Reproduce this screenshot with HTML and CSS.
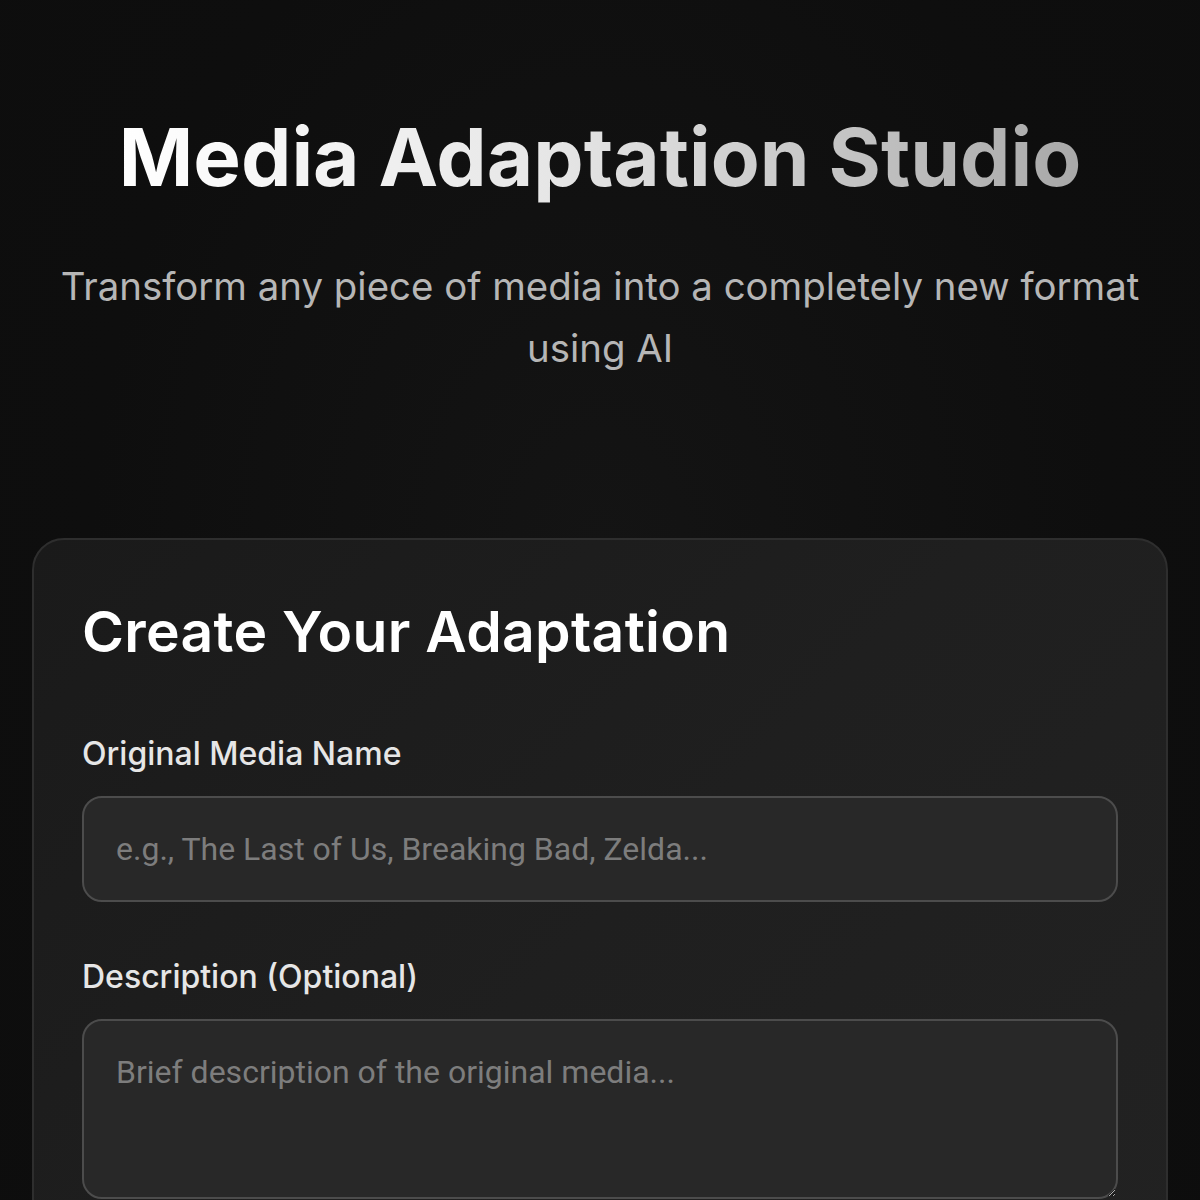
FILE: index.html
```html
<!DOCTYPE html>
<html lang="en">
<head>
<meta charset="utf-8">
<title>Media Adaptation Studio</title>
<link rel="stylesheet" href="styles.css">
</head>
<body>
<main class="page">
  <header class="hero">
    <h1 class="hero-title">Media Adaptation Studio</h1>
    <p class="hero-sub">Transform any piece of media into a completely new format using AI</p>
  </header>
  <section class="card">
    <h2 class="card-title">Create Your Adaptation</h2>
    <div class="field">
      <label class="field-label" for="media">Original Media Name</label>
      <input class="field-input" id="media" type="text" placeholder="e.g., The Last of Us, Breaking Bad, Zelda...">
    </div>
    <div class="field">
      <label class="field-label" for="desc">Description (Optional)</label>
      <textarea class="field-input field-area" id="desc" placeholder="Brief description of the original media..."></textarea>
    </div>
  </section>
</main>
</body>
</html>
```

FILE: styles.css
```css
* { box-sizing: border-box; }
html, body { margin: 0; padding: 0; }
body {
  background: radial-gradient(ellipse at 50% 40%, #141414 0%, #0e0e0e 60%, #0d0d0d 100%);
  background-color: #0e0e0e;
  min-height: 1200px;
  font-family: Inter, "Noto Sans", sans-serif;
  color: #e8e8e8;
}
.page {
  padding: 108px 32px 80px;
}
.hero {
  text-align: center;
  margin-bottom: 159px;
}
.hero-title {
  margin: 0;
  font-size: 80px;
  font-weight: 700;
  line-height: normal;
  background: linear-gradient(90deg, #ffffff 0%, #e6e6e6 45%, #a8a8a8 100%);
  -webkit-background-clip: text;
  background-clip: text;
  color: transparent;
  display: inline-block;
}
.hero-sub {
  margin: 50px 0 0;
  font-size: 38.4px;
  line-height: 62px;
  font-weight: 400;
  color: #b6b6b6;
}
.card {
  border: 2px solid #2e2e2e;
  border-radius: 32px;
  background: linear-gradient(135deg, #1a1a1a 0%, #1f1f1f 50%, #222222 100%);
  padding: 58px 48px 48px;
}
.card-title {
  margin: 0 0 69px;
  font-size: 57px;
  font-weight: 600;
  line-height: 68px;
  letter-spacing: 0.3px;
  color: #ffffff;
}
.field {
  margin-bottom: 56px;
}
.field-label {
  display: block;
  font-size: 32px;
  font-weight: 500;
  line-height: 38px;
  color: #e6e6e6;
  margin-bottom: 23px;
}
.field-input {
  display: block;
  width: 100%;
  font-family: Roboto, "Noto Sans", sans-serif;
  font-size: 32px;
  line-height: 38px;
  color: #e8e8e8;
  background: #282828;
  border: 2px solid #4c4c4c;
  border-radius: 20px;
  padding: 32px;
  outline: none;
}
.field-input::placeholder {
  color: #7d7d7d;
}
.field-area {
  height: 180px;
  resize: vertical;
}
```
